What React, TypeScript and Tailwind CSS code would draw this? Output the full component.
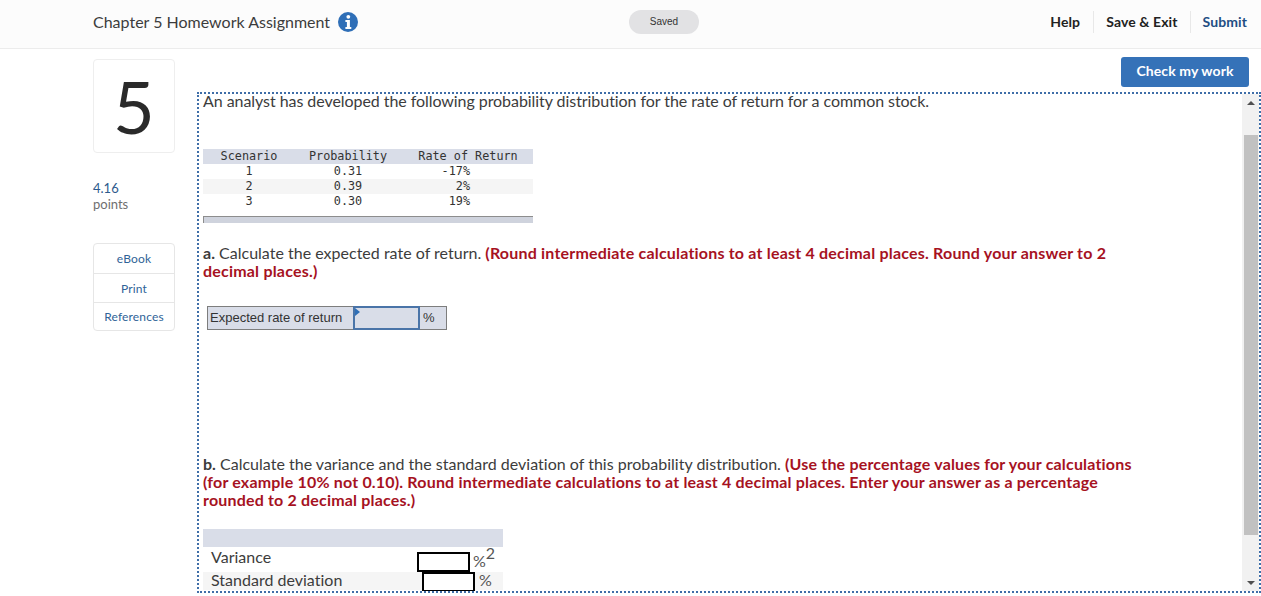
const proxima = "font-['Lato','Open_Sans',sans-serif]";

function Header() {
  return (
    <header className="h-[49px] bg-[#fcfcfc] border-b border-[#ececec] pl-[93px] pr-[14px] pb-[4px] flex items-center">
      <div className="w-[536px] flex items-center">
        <h1 className="text-[16px] text-[#3c3c3c] font-normal whitespace-nowrap">Chapter 5 Homework Assignment</h1>
        <svg className="ml-[8px]" width="20" height="20" viewBox="0 0 20 20">
          <circle cx="10" cy="10" r="10" fill="#2f6fb7" />
          <circle cx="10.3" cy="4.8" r="1.9" fill="#fff" />
          <path d="M7.4 8h4.5v7h1.4v1.9H7.4V15h1.5v-5.1H7.4z" fill="#fff" />
        </svg>
      </div>
      <div className="w-[70px] h-[24px] pb-[1px] rounded-full bg-[#e2e2e4] flex items-center justify-center text-[10px] text-[#333] font-['Liberation_Sans',sans-serif]">
        Saved
      </div>
      <nav className="ml-auto flex items-center text-[14px] tracking-[0.1px] font-bold">
        <span className="text-[#222] pr-[13px] border-r border-[#e8e8e8] leading-[22px]">Help</span>
        <span className="text-[#222] px-[12px] border-r border-[#e8e8e8] leading-[22px]">Save &amp; Exit</span>
        <span className="text-[#1f4e83] pl-[12px] leading-[22px]">Submit</span>
      </nav>
    </header>
  );
}

function Sidebar() {
  return (
    <aside className="w-[82px] shrink-0 ml-[93px] mt-[10px]">
      <div className="h-[94px] rounded-[4px] border border-[#eeeeee] flex items-center justify-center text-[72px] leading-none text-[#2a2a2a]">
        5
      </div>
      <div className="mt-[27px] text-[13px] leading-[16px] text-[#2d5a8c]">4.16</div>
      <div className="text-[13px] leading-[17px] text-[#6f6f6f]">points</div>
      <div className="mt-[30px] rounded-[4px] border border-[#e6e6e6] text-center text-[12px] tracking-[0.15px] text-[#2f6397]">
        <div className="h-[30px] flex items-center justify-center border-b border-[#e6e6e6]">eBook</div>
        <div className="h-[29px] pt-[1px] flex items-center justify-center border-b border-[#e6e6e6]">Print</div>
        <div className="h-[27px] flex items-center justify-center">References</div>
      </div>
    </aside>
  );
}

function ScenarioTable() {
  const rows = [
    ['1', '0.31', '-17%', ''],
    ['2', '0.39', '2%', 'bg-[#f5f5f5]'],
    ['3', '0.30', '19%', ''],
  ];
  return (
    <div className="mt-[39px] w-[330px] font-['DejaVu_Sans_Mono','Liberation_Mono',monospace] text-[11.8px] leading-[15px] tracking-normal text-[#333]">
      <div className="grid grid-cols-[96px_98px_136px] bg-[#d9dde8] text-center">
        <span className="pr-[4px]">Scenario</span>
        <span>Probability</span>
        <span className="pl-[6px]">Rate of Return</span>
      </div>
      {rows.map(([s, p, r, bg]) => (
        <div key={s} className={`grid grid-cols-[96px_98px_136px] text-center ${bg}`}>
          <span className="pr-[4px]">{s}</span>
          <span>{p}</span>
          <span className="text-right pr-[63px]">{r}</span>
        </div>
      ))}
      <div className="mt-[7px] h-[7px] bg-[#cfd3dd] border-t border-l border-[#8d8d8d]" />
    </div>
  );
}

function Scrollbar() {
  return (
    <div className="w-[17px] shrink-0 bg-[#f1f1f1] flex flex-col items-center">
      <div className="h-[17px] flex items-center justify-center">
        <div className="w-0 h-0 border-x-[4px] border-x-transparent border-b-[4px] border-b-[#505050]" />
      </div>
      <div className="w-[14px] h-[400px] mt-[24px] bg-[#c1c1c1]" />
      <div className="flex-1" />
      <div className="h-[17px] flex items-center justify-center">
        <div className="w-0 h-0 border-x-[4px] border-x-transparent border-t-[4px] border-t-[#505050]" />
      </div>
    </div>
  );
}

function Question() {
  return (
    <div className="flex-1 min-w-0 overflow-hidden pl-[4px] text-[16px] leading-[18px] text-[#3c3c3c] tracking-[0.01px]">
      <p className="-mt-[2px] whitespace-nowrap tracking-[-0.06px]">An analyst has developed the following probability distribution for the rate of return for a common stock.</p>

      <ScenarioTable />

      <p className="mt-[21px] w-[935px]">
        <b className="font-bold">a.</b> Calculate the expected rate of return.{' '}
        <b className="font-bold text-[#a6121f] tracking-[0.2px]">(Round intermediate calculations to at least 4 decimal places. Round your answer to 2 decimal places.)</b>
      </p>

      <div className="mt-[26px] ml-[4px] w-[240px] h-[24px] flex bg-[#d9dde8] border border-[#7d7d7d] font-['Liberation_Sans',sans-serif] text-[13px] tracking-normal text-[#333]">
        <div className="w-[145px] leading-[22px] pl-[2px]">Expected rate of return</div>
        <div className="relative w-[67px] -my-px border-2 border-[#4a74a8] bg-[#d9dde8]">
          <div className="absolute top-0 left-0 w-0 h-0 border-y-[4px] border-y-transparent border-l-[5px] border-l-[#2f6fb7]" />
        </div>
        <div className="leading-[22px] pl-[3px]">%</div>
      </div>

      <p className="mt-[125px] w-[935px]">
        <b className="font-bold">b.</b> Calculate the variance and the standard deviation of this probability distribution.{' '}
        <b className="font-bold text-[#a6121f] tracking-[0.18px]">(Use the percentage values for your calculations (for example 10% not 0.10). Round intermediate calculations to at least 4 decimal places. Enter your answer as a percentage rounded to 2 decimal places.)</b>
      </p>

      <div className="mt-[20px] w-[300px]">
        <div className="h-[18px] bg-[#d9dde8]" />
        <div className="h-[25px] flex items-end pl-[8px]">
          <span className="w-[206px] mb-[6px]">Variance</span>
          <span className="w-[53px] h-[20px] border-2 border-black bg-white" />
          <span className="pl-[3px] mb-[2px] text-[#555]">%<sup className="text-[16px] leading-none">2</sup></span>
        </div>
        <div className="h-[18px] bg-[#f5f5f5] flex items-start pl-[8px]">
          <span className="w-[211px] -mt-[1px]">Standard deviation</span>
          <span className="w-[53px] h-[20px] shrink-0 border-2 border-black bg-white" />
          <span className="pl-[4px] -mt-[1px] text-[#555]">%</span>
        </div>
      </div>
    </div>
  );
}

export default function App() {
  return (
    <div className={`w-[1261px] h-[596px] overflow-hidden bg-white ${proxima}`}>
      <Header />
      <div className="flex">
        <Sidebar />
        <main className="ml-[22px] flex-1 min-w-0">
          <div className="flex justify-end mt-[8px] pr-[12px]">
            <button className="w-[128px] h-[30px] pb-[3px] rounded-[3px] bg-[#3572b8] text-white text-[14px] tracking-[0.1px] font-bold">Check my work</button>
          </div>
          <div className="mt-[5px] h-[501px] flex border-2 border-dotted border-[#3f6ea8]">
            <Question />
            <Scrollbar />
          </div>
        </main>
      </div>
    </div>
  );
}
